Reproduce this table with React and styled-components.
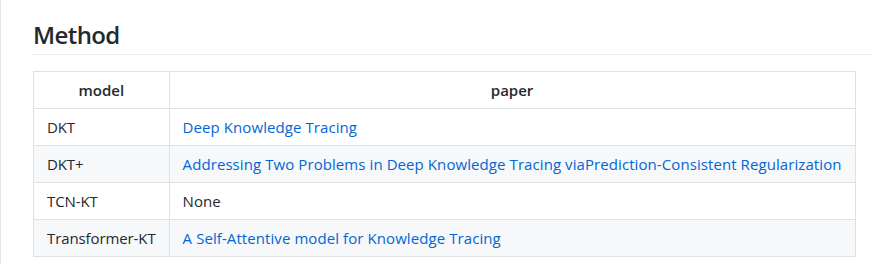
import React from "react";
import styled, { createGlobalStyle } from "styled-components";

const Global = createGlobalStyle`
  html, body { margin: 0; padding: 0; background: #fff; }
  body {
    font-family: "Open Sans", "Noto Sans", "Liberation Sans", sans-serif;
    font-size: 15px;
    line-height: 24px;
    color: #24292e;
  }
`;

const Page = styled.div`
  border-left: 1px solid #e1e4e8;
  padding: 20px 18px 8px 32px;
  min-height: 264px;
  box-sizing: border-box;
`;

const Heading = styled.h2`
  margin: 0 0 16px;
  padding-bottom: 4px;
  font-size: 24px;
  font-weight: 600;
  line-height: 30px;
  letter-spacing: -0.6px;
  border-bottom: 1px solid #eaecef;
`;

const Table = styled.table`
  border-collapse: collapse;
  border-spacing: 0;
`;

const Row = styled.tr`
  background: ${(p) => (p.$striped ? "#f6f8fa" : "#fff")};
`;

const HeadCell = styled.th`
  padding: 6px 13px;
  border: 1px solid #dfe2e5;
  font-weight: 600;
  text-align: center;
`;

const Cell = styled.td`
  padding: 6px 13px;
  border: 1px solid #dfe2e5;
  white-space: nowrap;
  letter-spacing: ${(p) => (p.$wide ? "0.08px" : "-0.1px")};
`;

const Link = styled.a`
  color: #0366d6;
  text-decoration: none;
`;

const rows = [
  ["DKT", "Deep Knowledge Tracing", true],
  ["DKT+", "Addressing Two Problems in Deep Knowledge Tracing viaPrediction-Consistent Regularization", true],
  ["TCN-KT", "None", false],
  ["Transformer-KT", "A Self-Attentive model for Knowledge Tracing", true],
];

export default function App() {
  return (
    <>
      <Global />
      <Page>
        <Heading>Method</Heading>
        <Table>
          <thead>
            <Row>
              <HeadCell>model</HeadCell>
              <HeadCell>paper</HeadCell>
            </Row>
          </thead>
          <tbody>
            {rows.map(([m, p, link], i) => (
              <Row key={m} $striped={i % 2 === 1}>
                <Cell>{m}</Cell>
                <Cell $wide>{link ? <Link href="#">{p}</Link> : p}</Cell>
              </Row>
            ))}
          </tbody>
        </Table>
      </Page>
    </>
  );
}
